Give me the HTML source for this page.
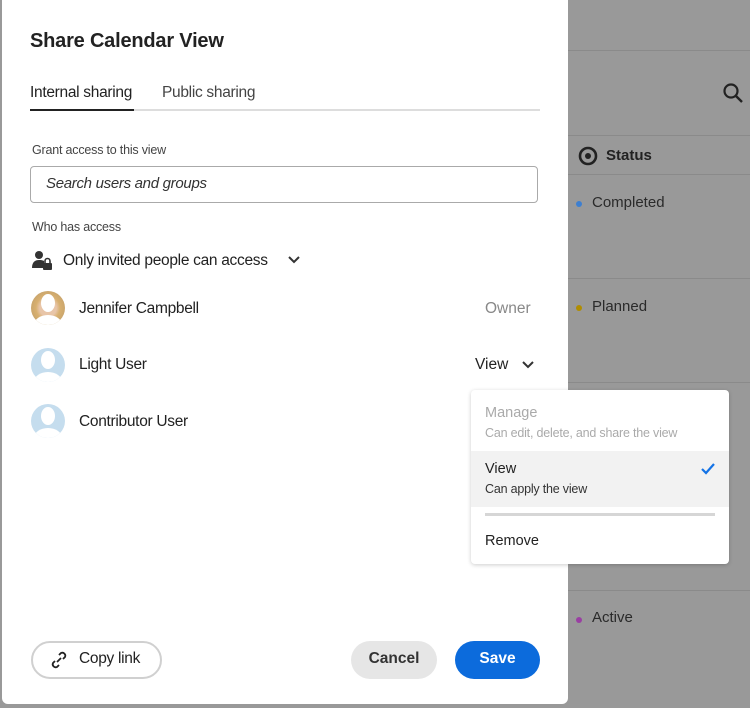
<!DOCTYPE html>
<html><head><style>
*{margin:0;padding:0;box-sizing:border-box}
body{width:750px;height:708px;background:#999;position:relative;overflow:hidden;font-family:"Liberation Sans",sans-serif;color:#222}
.a{position:absolute;white-space:nowrap}
.hl{position:absolute;left:568px;width:182px;height:1px;background:#8a8a8a}
.dlg{position:absolute;left:2px;top:0;width:566px;height:704px;background:#fff;border-radius:0 0 6px 6px}
.av{position:absolute;width:34px;height:34px;border-radius:50%;background:#c5ddee;overflow:hidden}
.av:before{content:"";position:absolute;left:10px;top:3px;width:14px;height:18px;border-radius:50%;background:#fff}
.av:after{content:"";position:absolute;left:3px;top:24px;width:28px;height:20px;border-radius:50%;background:#fff}
</style></head><body>
<div class="hl" style="top:50px"></div>
<div class="hl" style="top:135px"></div>
<div class="hl" style="top:174px"></div>
<div class="hl" style="top:278px"></div>
<div class="hl" style="top:382px"></div>
<div class="hl" style="top:590px"></div>
<svg class="a" style="left:722px;top:82px" width="22" height="22" viewBox="0 0 22 22"><circle cx="9" cy="9" r="6.5" fill="none" stroke="#222" stroke-width="2.2"/><path d="M14 14l6 6" stroke="#222" stroke-width="2.4"/></svg>
<svg class="a" style="left:578px;top:146px" width="20" height="20"><circle cx="10" cy="10" r="8" fill="none" stroke="#222" stroke-width="2.6"/><circle cx="10" cy="10" r="3" fill="#222"/></svg>
<div class="a" style="left:606px;top:147px;font-size:15px;font-weight:bold">Status</div>
<div class="a" style="left:576px;top:201px;width:6px;height:6px;border-radius:50%;background:#3d7fd0"></div>
<div class="a" style="left:592px;top:194px;font-size:15px;color:#2a2a2a">Completed</div>
<div class="a" style="left:576px;top:305px;width:6px;height:6px;border-radius:50%;background:#b08d00"></div>
<div class="a" style="left:592px;top:298px;font-size:15px;color:#2a2a2a">Planned</div>
<div class="a" style="left:576px;top:617px;width:6px;height:6px;border-radius:50%;background:#9a3fa3"></div>
<div class="a" style="left:592px;top:609px;font-size:15px;color:#2a2a2a">Active</div>

<div class="dlg"></div>
<div class="a" style="left:30px;top:30px;font-size:20px;font-weight:bold;color:#222;letter-spacing:-0.2px">Share Calendar View</div>
<div class="a" style="left:30px;top:84px;font-size:15.5px;color:#222;letter-spacing:-0.3px">Internal sharing</div>
<div class="a" style="left:162px;top:84px;font-size:15.5px;color:#444;letter-spacing:-0.3px">Public sharing</div>
<div class="a" style="left:30px;top:109px;width:510px;height:2px;background:#ddd"></div>
<div class="a" style="left:30px;top:109px;width:104px;height:2px;background:#222"></div>
<div class="a" style="left:32px;top:143px;font-size:12.5px;color:#444;letter-spacing:-0.2px">Grant access to this view</div>
<div class="a" style="left:30px;top:166px;width:508px;height:37px;border:1px solid #aaa;border-radius:4px"></div>
<div class="a" style="left:46px;top:175px;font-size:15px;font-style:italic;color:#333;letter-spacing:-0.3px">Search users and groups</div>
<div class="a" style="left:32px;top:220px;font-size:12.5px;color:#444;letter-spacing:-0.2px">Who has access</div>
<svg class="a" style="left:31px;top:250px" width="22" height="22" viewBox="0 0 22 22"><circle cx="8" cy="5" r="4" fill="#333"/><path d="M1 18c0-6 3-8 7-8s5 1 5 1v7z" fill="#333"/><rect x="12" y="13" width="9" height="7" rx="1" fill="#333"/><path d="M14 13v-2a2.5 2.5 0 015 0v2" fill="none" stroke="#333" stroke-width="1.6"/></svg>
<div class="a" style="left:63px;top:252px;font-size:15.5px;color:#222;letter-spacing:-0.3px">Only invited people can access</div>
<svg class="a" style="left:287px;top:255px" width="14" height="10"><path d="M2 2l5 5 5-5" fill="none" stroke="#333" stroke-width="2"/></svg>
<div class="av" style="left:31px;top:291px;background:radial-gradient(circle at 50% 50%,#e8c5a8 0 35%,#d8b070 50%,#b89868 100%)"></div>
<div class="a" style="left:79px;top:300px;font-size:15.5px;color:#222;letter-spacing:-0.3px">Jennifer Campbell</div>
<div class="a" style="left:485px;top:300px;font-size:15.5px;color:#888">Owner</div>
<div class="av" style="left:31px;top:348px"></div>
<div class="a" style="left:79px;top:356px;font-size:15.5px;color:#222;letter-spacing:-0.3px">Light User</div>
<div class="a" style="left:475px;top:356px;font-size:15.5px;color:#222">View</div>
<svg class="a" style="left:521px;top:360px" width="14" height="10"><path d="M2 2l5 5 5-5" fill="none" stroke="#333" stroke-width="2"/></svg>
<div class="av" style="left:31px;top:404px"></div>
<div class="a" style="left:79px;top:413px;font-size:15.5px;color:#222;letter-spacing:-0.3px">Contributor User</div>

<div class="a" style="left:471px;top:390px;width:258px;height:174px;background:#fff;border-radius:4px;box-shadow:0 1px 4px rgba(0,0,0,.2)"></div>
<div class="a" style="left:485px;top:405px;font-size:14.5px;color:#aaa">Manage</div>
<div class="a" style="left:485px;top:426px;font-size:12.5px;color:#aaa;letter-spacing:-0.2px">Can edit, delete, and share the view</div>
<div class="a" style="left:471px;top:451px;width:258px;height:56px;background:#f2f2f2"></div>
<div class="a" style="left:485px;top:461px;font-size:14.5px;color:#222">View</div>
<div class="a" style="left:485px;top:482px;font-size:12.5px;color:#333;letter-spacing:-0.2px">Can apply the view</div>
<svg class="a" style="left:700px;top:462px" width="16" height="14"><path d="M2 7l4 4 8-9" fill="none" stroke="#1473e6" stroke-width="2.2"/></svg>
<div class="a" style="left:485px;top:513px;width:230px;height:3px;background:#d6d6d6"></div>
<div class="a" style="left:485px;top:533px;font-size:14.5px;color:#222">Remove</div>

<div class="a" style="left:31px;top:641px;width:131px;height:38px;border:2px solid #d0d0d0;border-radius:19px"></div>
<svg class="a" style="left:48px;top:649px" width="22" height="22" viewBox="0 0 22 22"><g fill="none" stroke="#222" stroke-width="1.8"><path d="M9 13l4-4"/><path d="M11 6l2-2a3 3 0 014 4l-2 2"/><path d="M11 16l-2 2a3 3 0 01-4-4l2-2"/></g></svg>
<div class="a" style="left:79px;top:650px;font-size:15.5px;color:#222;letter-spacing:-0.3px">Copy link</div>
<div class="a" style="left:351px;top:641px;width:86px;height:38px;background:#e6e6e6;border-radius:19px"></div>
<div class="a" style="left:351px;top:650px;width:86px;text-align:center;font-size:15.5px;font-weight:bold;color:#333">Cancel</div>
<div class="a" style="left:455px;top:641px;width:85px;height:38px;background:#0c6bdc;border-radius:19px"></div>
<div class="a" style="left:455px;top:650px;width:85px;text-align:center;font-size:15.5px;font-weight:bold;color:#fff">Save</div>
</body></html>
